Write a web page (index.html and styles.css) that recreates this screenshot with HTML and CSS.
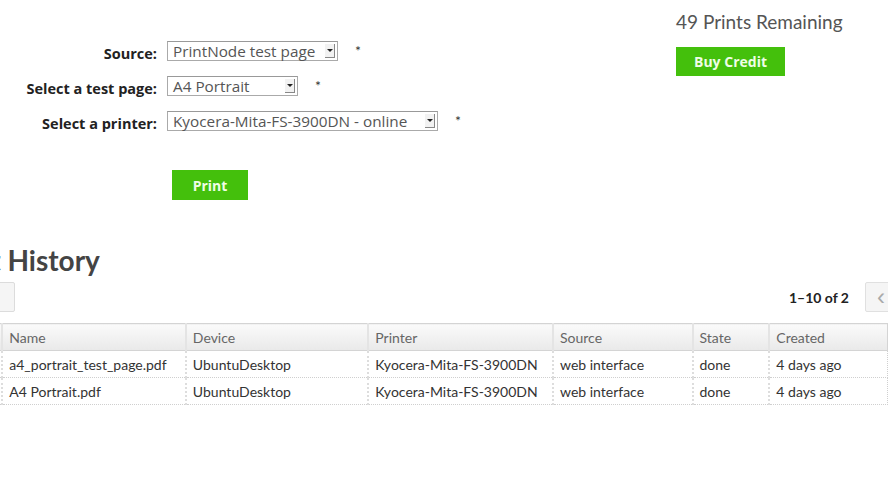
FILE: index.html
```html
<!DOCTYPE html>
<html lang="en">
<head>
  <meta charset="UTF-8">
  <title>Print a test page</title>
  <link rel="stylesheet" href="styles.css">
</head>
<body>

  <!-- test page form + credit -->
  <div class="top">
    <form class="test-form">
      <label class="lbl">Source:</label>
      <div class="field">
        <span class="select w-source">PrintNode test page<i class="arrow"></i></span>
        <span class="req">*</span>
      </div>

      <label class="lbl">Select a test page:</label>
      <div class="field">
        <span class="select w-page">A4 Portrait<i class="arrow"></i></span>
        <span class="req">*</span>
      </div>

      <label class="lbl">Select a printer:</label>
      <div class="field">
        <span class="select w-printer">Kyocera-Mita-FS-3900DN - online<i class="arrow"></i></span>
        <span class="req">*</span>
      </div>

      <span></span>
      <div class="submit"><button type="button" class="btn-green print-btn">Print</button></div>
    </form>

    <div class="credit">
      <div class="remaining">49 Prints Remaining</div>
      <button type="button" class="btn-green buy-btn">Buy Credit</button>
    </div>
  </div>

  <!-- history -->
  <section class="history">
    <h2>Print History</h2>

    <div class="toolbar">
      <button type="button" class="tool-btn"></button>
      <div class="pager">
        <span class="count">1&ndash;10 of 2</span>
        <button type="button" class="pg-btn">&lsaquo;</button>
      </div>
    </div>

    <table class="jobs">
      <thead>
        <tr>
          <th class="c-sel"></th>
          <th class="c-name">Name</th>
          <th class="c-dev">Device</th>
          <th class="c-prn">Printer</th>
          <th class="c-src">Source</th>
          <th class="c-state">State</th>
          <th class="c-created">Created</th>
        </tr>
      </thead>
      <tbody>
        <tr>
          <td></td>
          <td>a4_portrait_test_page.pdf</td>
          <td>UbuntuDesktop</td>
          <td>Kyocera-Mita-FS-3900DN</td>
          <td>web interface</td>
          <td>done</td>
          <td>4 days ago</td>
        </tr>
        <tr>
          <td></td>
          <td>A4 Portrait.pdf</td>
          <td>UbuntuDesktop</td>
          <td>Kyocera-Mita-FS-3900DN</td>
          <td>web interface</td>
          <td>done</td>
          <td>4 days ago</td>
        </tr>
      </tbody>
    </table>
  </section>

</body>
</html>
```

FILE: styles.css
```css
/* base */
body {
  margin: 0;
  padding: 0;
  background: #fff;
  font-family: 'Lato', 'Open Sans', sans-serif;
  color: #444;
  overflow: hidden;
}

/* top area */
.top {
  display: flex;
  padding-top: 10px;
}

.test-form {
  display: grid;
  grid-template-columns: 157px auto;
  column-gap: 10px;
  row-gap: 15px;
  align-items: center;
  margin-top: 31px;
  width: 676px;
  align-content: start;
}

.lbl {
  text-align: right;
  font-family: 'Open Sans', sans-serif;
  font-weight: 700;
  font-size: 14.5px;
  color: #222;
  line-height: 20px;
  padding-top: 3px;
  margin-bottom: -3px;
  white-space: nowrap;
}

.field {
  display: flex;
  align-items: flex-start;
}

.select {
  position: relative;
  display: block;
  box-sizing: border-box;
  height: 20px;
  padding: 0 0 0 5px;
  border: 1px solid #aaa;
  border-top-color: #999;
  background: #fff;
  font-family: 'Open Sans', sans-serif;
  font-size: 15.3px;
  line-height: 18px;
  color: #555;
  white-space: nowrap;
}

.w-source { width: 171px; }
.w-page { width: 131px; }
.w-printer { width: 271px; }

.arrow {
  position: absolute;
  right: 2px;
  top: 2px;
  width: 10px;
  height: 14px;
  background: #f2f2f2;
  border-right: 1px solid #888;
  border-bottom: 1px solid #888;
  box-sizing: border-box;
}

.arrow::after {
  content: "";
  position: absolute;
  left: 2px;
  top: 5px;
  border-left: 3px solid transparent;
  border-right: 3px solid transparent;
  border-top: 3px solid #222;
}

.req {
  margin-left: 17px;
  padding-top: 3px;
  font-size: 14px;
  line-height: 14px;
  color: #333;
}

.submit {
  padding-top: 24px;
  padding-left: 5px;
}

.btn-green {
  background: #44c00c;
  border: none;
  color: #effde6;
  font-family: 'Open Sans', sans-serif;
  font-weight: 700;
  font-size: 14px;
  cursor: pointer;
  padding: 0;
}

.print-btn {
  width: 76px;
  height: 30px;
}

/* credit box */
.credit {
  display: flex;
  flex-direction: column;
  align-items: flex-start;
}

.remaining {
  font-size: 19px;
  color: #555;
  line-height: 24px;
}

.buy-btn {
  margin-top: 13px;
  width: 109px;
  height: 29px;
}

/* history */
.history {
  margin-left: -60px;
}

.history h2 {
  margin: 43px 0 0;
  font-size: 28px;
  font-weight: 700;
  color: #444;
  line-height: 34px;
}

.toolbar {
  display: flex;
  justify-content: space-between;
  align-items: center;
  margin-top: 5px;
  height: 30px;
}

.tool-btn {
  width: 75px;
  height: 30px;
  background: #f5f5f5;
  border: 1px solid #dcdcdc;
  border-radius: 2px;
}

.pager {
  display: flex;
  align-items: center;
  gap: 16px;
  margin-right: -62px;
}

.count {
  font-weight: 700;
  font-size: 14px;
  color: #222;
}

.pg-btn {
  width: 85px;
  height: 30px;
  background: #f5f5f5;
  border: 1px solid #e0e0e0;
  border-radius: 2px;
  color: #aaa;
  font-size: 24px;
  line-height: 26px;
  text-align: left;
  padding: 0 0 0 11px;
}

/* job table */
.jobs {
  margin-top: 11px;
  border-collapse: collapse;
  table-layout: fixed;
  font-size: 14px;
}

.jobs th,
.jobs td {
  height: 26px;
  padding: 0 6px;
  text-align: left;
  white-space: nowrap;
  overflow: hidden;
}

.jobs th {
  font-weight: 400;
  color: #666;
  background: linear-gradient(#fafafa, #e9e9e9);
  border: 1px solid #d4d4d4;
  border-left: 2px solid #e4e4e4;
}

.jobs td {
  color: #333;
  border: 1px dotted #cfcfcf;
  border-left: 2px dotted #ddd;
}

.c-sel { width: 49px; }
.c-name { width: 170px; }
.c-dev { width: 171px; }
.c-prn { width: 171px; }
.c-src { width: 127px; }
.c-state { width: 64px; }
.c-created { width: 106px; }
```
